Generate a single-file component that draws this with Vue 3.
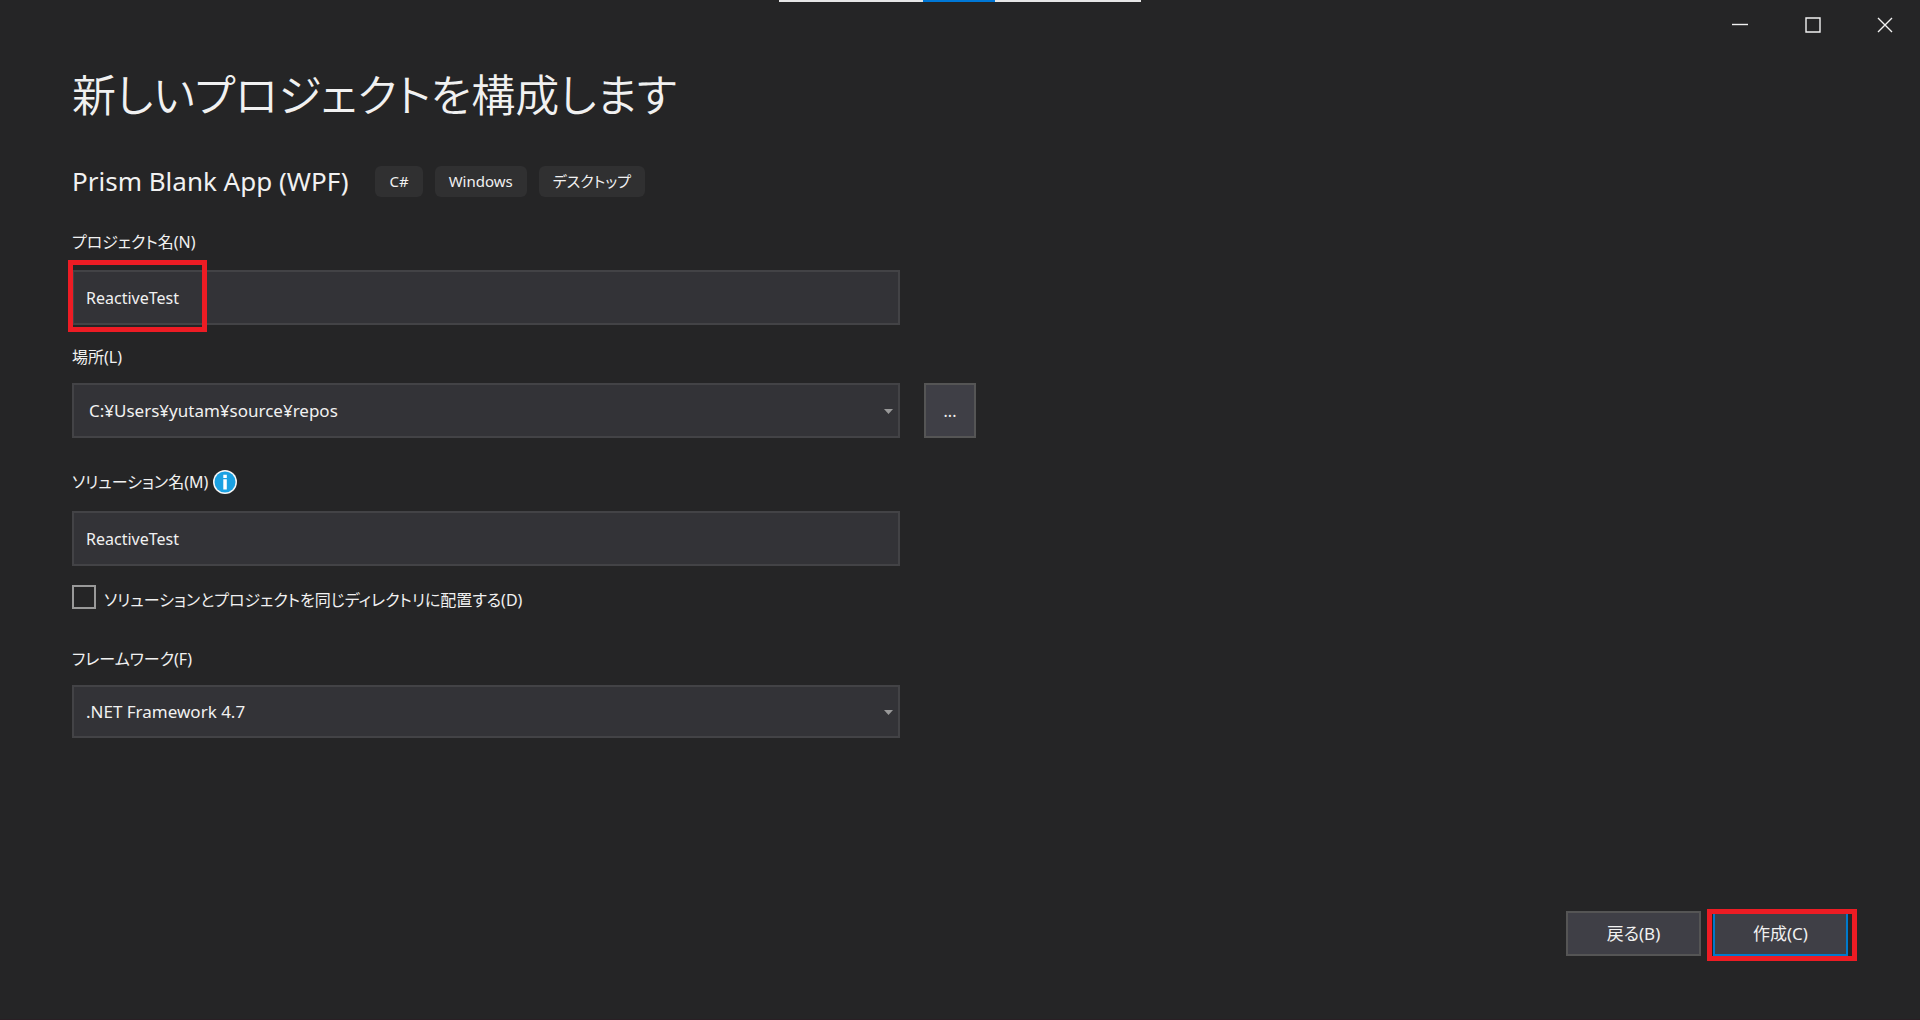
<script setup>
import { ref } from 'vue'

const tags = ['C#', 'Windows', 'デスクトップ']
const projectName = ref('ReactiveTest')
const location = ref('C:¥Users¥yutam¥source¥repos')
const solutionName = ref('ReactiveTest')
const sameDirectory = ref(false)
const framework = ref('.NET Framework 4.7')
</script>

<template>
  <div class="window">
    <div class="drag-strip"><span class="drag-grip"></span></div>

    <header class="titlebar">
      <button class="caption" type="button" aria-label="最小化">
        <svg width="16" height="16" viewBox="0 0 16 16"><path d="M0 7.5H16" /></svg>
      </button>
      <button class="caption" type="button" aria-label="最大化">
        <svg width="16" height="16" viewBox="0 0 16 16"><path d="M1 1H15V15H1Z" /></svg>
      </button>
      <button class="caption" type="button" aria-label="閉じる">
        <svg width="16" height="16" viewBox="0 0 16 16"><path d="M1 1L15 15M15 1L1 15" /></svg>
      </button>
    </header>

    <main class="content">
      <h1>新しいプロジェクトを構成します</h1>

      <div class="template">
        <h2>Prism Blank App (WPF)</h2>
        <ul class="tags">
          <li v-for="tag in tags" :key="tag">{{ tag }}</li>
        </ul>
      </div>

      <form class="form" @submit.prevent>
        <div class="field project">
          <label for="project">プロジェクト名(N)</label>
          <div class="control">
            <input id="project" v-model="projectName" class="box" type="text" />
            <span class="highlight highlight-name"></span>
          </div>
        </div>

        <div class="field location">
          <label for="location">場所(L)</label>
          <div class="control">
            <select id="location" v-model="location" class="box path">
              <option>C:¥Users¥yutam¥source¥repos</option>
            </select>
            <svg class="arrow" width="9" height="5" viewBox="0 0 9 5"><path d="M0 0H9L4.5 5Z" /></svg>
          </div>
          <button class="browse" type="button">...</button>
        </div>

        <div class="field solution">
          <div class="label-row">
            <label for="solution">ソリューション名(M)</label>
            <svg width="24" height="24" viewBox="0 0 24 24">
              <circle cx="12" cy="12" r="12" fill="#f6f6f6" />
              <circle cx="12" cy="12" r="10.5" fill="#1ba1e2" />
              <path d="M10.3 4.7H13.8V8H10.3ZM10.3 9.3H13.8V19.5H10.3Z" fill="#fff" />
            </svg>
          </div>
          <div class="control">
            <input id="solution" v-model="solutionName" class="box" type="text" />
          </div>
        </div>

        <div class="check">
          <input id="same-dir" v-model="sameDirectory" type="checkbox" />
          <label for="same-dir">ソリューションとプロジェクトを同じディレクトリに配置する(D)</label>
        </div>

        <div class="field framework">
          <label for="framework">フレームワーク(F)</label>
          <div class="control">
            <select id="framework" v-model="framework" class="box">
              <option>.NET Framework 4.7</option>
            </select>
            <svg class="arrow" width="9" height="5" viewBox="0 0 9 5"><path d="M0 0H9L4.5 5Z" /></svg>
          </div>
        </div>
      </form>
    </main>

    <footer class="actions">
      <button class="action" type="button">戻る(B)</button>
      <div class="primary">
        <button class="action create" type="button">作成(C)</button>
        <span class="highlight highlight-create"></span>
      </div>
    </footer>
  </div>
</template>

<style>
body {
  background: #252526;
}
</style>

<style scoped>
* {
  box-sizing: border-box;
}

.window {
  position: relative;
  display: flex;
  flex-direction: column;
  min-height: 100vh;
  background: #252526;
  border-bottom: 1px solid #291f24;
  color: #f1f1f1;
  font-family: "Noto Sans", "Noto Sans CJK JP", sans-serif;
  font-size: 16px;
  line-height: 24px;
  font-feature-settings: "palt";
}

button,
input,
select {
  margin: 0;
  color: inherit;
  font: inherit;
  font-feature-settings: inherit;
}

.drag-strip {
  position: absolute;
  top: 0;
  left: 50%;
  width: 362px;
  height: 2px;
  margin-left: -181px;
  background: #e6e6e6;
}

.drag-grip {
  display: block;
  width: 72px;
  height: 2px;
  margin-left: 144px;
  background: #0078d7;
}

.titlebar {
  display: flex;
  justify-content: flex-end;
  gap: 1px;
  height: 50px;
}

.caption {
  display: flex;
  align-items: center;
  justify-content: center;
  width: 72px;
  height: 50px;
  padding: 0;
  border: 0;
  background: none;
}

.caption:last-child {
  width: 70px;
}

.caption path {
  fill: none;
  stroke: #f1f1f1;
  stroke-width: 1.4;
}

.content {
  padding: 11px 72px 0;
}

h1 {
  margin: 0;
  font-family: "Noto Sans CJK JP", sans-serif;
  font-size: 44px;
  font-weight: 350;
  line-height: 64px;
}

.template {
  display: flex;
  align-items: center;
  gap: 27px;
  height: 31px;
  margin-top: 41px;
}

h2 {
  margin: 0;
  font-size: 26px;
  font-weight: 400;
  line-height: 31px;
}

.tags {
  display: flex;
  gap: 12px;
  margin: 0;
  padding: 0;
  list-style: none;
}

.tags li {
  height: 31px;
  padding: 0 14px;
  border-radius: 6px;
  background: #303031;
  font-size: 15px;
  line-height: 31px;
}

.form {
  max-width: 828px;
  margin-top: 34px;
}

.field {
  position: relative;
  display: flex;
  flex-direction: column;
  gap: 13px;
}

.field > label {
  padding-bottom: 2px;
  line-height: 22px;
}

.project {
  gap: 15px;
}

.location {
  margin-top: 21px;
}

.solution {
  gap: 17px;
  margin-top: 32px;
}

.framework {
  margin-top: 39px;
}

.label-row {
  display: flex;
  gap: 5px;
}

.control {
  position: relative;
}

.box {
  display: block;
  width: 100%;
  height: 55px;
  padding: 0 12px;
  border: 2px solid #434346;
  border-radius: 0;
  background: #333337;
  appearance: none;
  outline: none;
}

select.box {
  font-size: 17px;
}

.path {
  padding: 0 15px;
}

.framework .box {
  height: 53px;
}

.arrow {
  position: absolute;
  top: 26px;
  right: 7px;
  fill: #999;
  pointer-events: none;
}

.framework .arrow {
  top: 25px;
}

.browse {
  position: absolute;
  left: calc(100% + 24px);
  bottom: 0;
  width: 52px;
  height: 55px;
  padding: 0;
  border: 2px solid #555;
  background: #3f3f46;
}

.check {
  display: flex;
  gap: 8px;
  height: 24px;
  margin-top: 19px;
}

.check input {
  flex: none;
  width: 24px;
  height: 24px;
  border: 2px solid #999;
  background: #252526;
  appearance: none;
}

.check label {
  padding-top: 3px;
  white-space: nowrap;
}

.actions {
  display: flex;
  justify-content: flex-end;
  gap: 12px;
  margin-top: auto;
  padding: 40px 72px 63px;
}

.primary {
  position: relative;
}

.action {
  display: block;
  width: 135px;
  height: 45px;
  padding: 0;
  border: 2px solid #555;
  background: #3f3f46;
  font-size: 17px;
}

.create {
  border-color: #007acc;
}

.highlight {
  position: absolute;
  border: 5px solid #ed1c24;
  pointer-events: none;
}

.highlight-name {
  top: -10px;
  left: -4px;
  width: 139px;
  height: 72px;
}

.highlight-create {
  top: -2px;
  right: -9px;
  bottom: -5px;
  left: -6px;
}
</style>
